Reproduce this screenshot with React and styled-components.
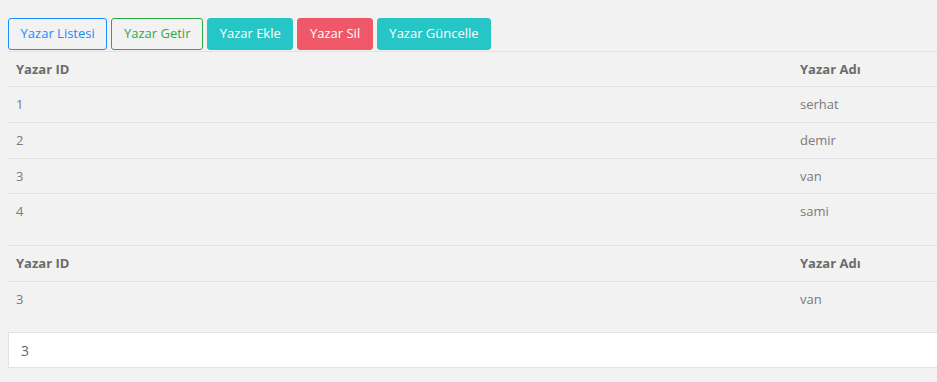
import React from "react";
import styled, { createGlobalStyle } from "styled-components";

const GlobalStyle = createGlobalStyle`
  html, body {
    margin: 0;
    background: #f2f2f2;
    overflow: hidden;
  }
  body {
    padding: 8px;
    font-family: "Open Sans", "Liberation Sans", sans-serif;
    font-size: 13px;
    line-height: 1.5;
    color: #777;
  }
`;

const Page = styled.div({
  width: "1100px",
  paddingTop: "10px",
});

const Toolbar = styled.div({
  display: "flex",
  gap: "4px",
  marginBottom: "1px",
});

const variants = {
  outlinePrimary: { bg: "transparent", border: "#1a8cff", color: "#1a8cff" },
  outlineSuccess: { bg: "transparent", border: "#2eaa45", color: "#2eaa45" },
  info: { bg: "#26c6c7", border: "#26c6c7", color: "#fff" },
  danger: { bg: "#ef5868", border: "#ef5868", color: "#fff" },
};

const Button = styled.button`
  font-family: inherit;
  font-size: 13px;
  line-height: 19.5px;
  padding: 5px 11.6px;
  border-radius: 3px;
  cursor: pointer;
  background: ${(p) => variants[p.$variant].bg};
  border: 1px solid ${(p) => variants[p.$variant].border};
  color: ${(p) => variants[p.$variant].color};
`;

const Table = styled.table({
  width: "100%",
  borderCollapse: "collapse",
  marginBottom: "16px",
  "& th, & td": {
    padding: "8px",
    textAlign: "left",
    borderTop: "1px solid #e2e2e2",
    lineHeight: "18.7px",
    fontSize: "13px",
  },
  "& th": {
    fontWeight: 700,
    color: "#6b6b6b",
    borderBottom: "1px solid #e2e2e2",
  },
  "& td": {
    color: "#7a7a7a",
  },
  "& tbody tr:first-child td": {
    borderTop: "none",
  },
  "& th:first-child, & td:first-child": {
    width: "768px",
  },
});

const Input = styled.input({
  display: "block",
  boxSizing: "border-box",
  width: "100%",
  height: "36px",
  padding: "6px 12px",
  border: "1px solid #e2e2e2",
  background: "#fff",
  fontFamily: "inherit",
  fontSize: "14px",
  color: "#666",
  outline: "none",
});

const authors = [
  { id: 1, name: "serhat" },
  { id: 2, name: "demir" },
  { id: 3, name: "van" },
  { id: 4, name: "sami" },
];

const AuthorTable = ({ rows }) => (
  <Table>
    <thead>
      <tr>
        <th>Yazar ID</th>
        <th>Yazar Adı</th>
      </tr>
    </thead>
    <tbody>
      {rows.map((r) => (
        <tr key={r.id}>
          <td>{r.id}</td>
          <td>{r.name}</td>
        </tr>
      ))}
    </tbody>
  </Table>
);

export default function App() {
  return (
    <>
      <GlobalStyle />
      <Page>
        <Toolbar>
          <Button $variant="outlinePrimary">Yazar Listesi</Button>
          <Button $variant="outlineSuccess">Yazar Getir</Button>
          <Button $variant="info">Yazar Ekle</Button>
          <Button $variant="danger">Yazar Sil</Button>
          <Button $variant="info">Yazar Güncelle</Button>
        </Toolbar>
        <AuthorTable rows={authors} />
        <AuthorTable rows={[{ id: 3, name: "van" }]} />
        <Input defaultValue="3" />
      </Page>
    </>
  );
}
